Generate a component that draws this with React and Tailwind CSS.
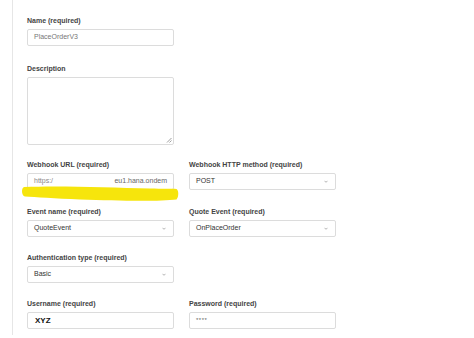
import React from "react";

const font = { fontFamily: '"Liberation Sans", Arial, sans-serif' };

function Label({ children }) {
  return (
    <div className="text-[7px] leading-[10px] font-bold text-[#444] mb-[3px] whitespace-nowrap">
      {children}
    </div>
  );
}

function Chevron() {
  return (
    <svg width="4" height="3" viewBox="0 0 4 3" className="shrink-0">
      <path d="M0.5 0.8 L2 2.3 L3.5 0.8" fill="none" stroke="#a0a0a0" strokeWidth="0.8" />
    </svg>
  );
}

function Field({ label, children }) {
  return (
    <div className="w-[147px]">
      <Label>{label}</Label>
      {children}
    </div>
  );
}

function Box({ children, className = "" }) {
  return (
    <div
      className={
        "h-[17px] border border-[#dcdcdc] rounded-[2px] bg-white flex items-center px-[6px] text-[7px] text-[#555] " +
        className
      }
    >
      {children}
    </div>
  );
}

function Select({ value }) {
  return (
    <Box className="justify-between pr-[7px]">
      <span className="text-[#333]">{value}</span>
      <Chevron />
    </Box>
  );
}

export default function App() {
  return (
    <div className="w-[474px] h-[338px] bg-white relative overflow-hidden" style={font}>
      <div className="ml-[12px] h-[335px] border-l border-[#e6e6e6] pl-[14px] pt-[16px] flex flex-col">
        {/* name */}
        <div className="flex gap-[15px]">
          <Field label="Name (required)">
            <Box className="text-[#777]">PlaceOrderV3</Box>
          </Field>
        </div>

        {/* description */}
        <div className="flex gap-[15px] mt-[18px]">
          <Field label="Description">
            <div className="h-[68px] border border-[#dcdcdc] rounded-[2px] bg-white relative">
              <svg width="6" height="6" viewBox="0 0 6 6" className="absolute right-[1px] bottom-[1px]">
                <path d="M5.5 1 L1 5.5 M5.5 3.5 L3.5 5.5" stroke="#777" strokeWidth="0.7" />
              </svg>
            </div>
          </Field>
        </div>

        {/* webhook */}
        <div className="flex gap-[15px] mt-[15px]">
          <Field label="Webhook URL (required)">
            <Box className="justify-between text-[#888]">
              <span>https:/</span>
              <span className="text-[#666]">eu1.hana.ondem</span>
            </Box>
          </Field>
          <Field label="Webhook HTTP method (required)">
            <Select value="POST" />
          </Field>
        </div>

        {/* events */}
        <div className="flex gap-[15px] mt-[17px]">
          <Field label="Event name (required)">
            <Select value="QuoteEvent" />
          </Field>
          <Field label="Quote Event (required)">
            <Select value="OnPlaceOrder" />
          </Field>
        </div>

        {/* auth */}
        <div className="flex gap-[15px] mt-[16px]">
          <Field label="Authentication type (required)">
            <Select value="Basic" />
          </Field>
        </div>

        {/* credentials */}
        <div className="flex gap-[15px] mt-[16px]">
          <Field label="Username (required)">
            <Box className="h-[16px]">
              <span className="text-[8px] font-semibold text-[#111] pl-[1px]">XYZ</span>
            </Box>
          </Field>
          <Field label="Password (required)">
            <Box className="h-[16px]">
              <span className="text-[6px] text-[#666] tracking-[0.5px]">****</span>
            </Box>
          </Field>
        </div>
      </div>

      {/* yellow marker redaction */}
      <svg
        className="absolute left-0 top-0 pointer-events-none"
        width="474"
        height="338"
        viewBox="0 0 474 338"
      >
        <path
          d="M24 187 C60 185.5 110 187.5 150 188.5 C162 188.8 172 188.5 176.5 189 C178.8 190 179 197 176.5 199.5 C160 201.5 120 201 80 199.5 C55 198.5 35 197 25 196.5 C21.5 196 21 188 24 187 Z"
          fill="#f6e50c"
        />
      </svg>
    </div>
  );
}
